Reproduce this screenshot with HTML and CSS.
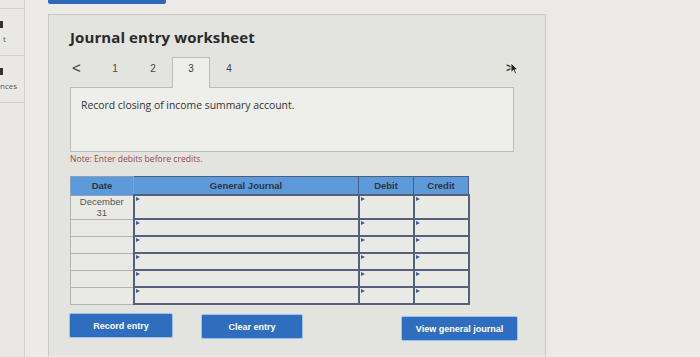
FILE: index.html
```html
<!DOCTYPE html>
<html lang="en">
<head>
    <meta charset="UTF-8">
    <meta name="viewport" content="width=device-width, initial-scale=1.0">
    <title>Journal entry worksheet</title>
    <link rel="stylesheet" href="styles.css">
</head>
<body>
    <div class="strona">
        <aside class="boczny">
            <div class="boczny-item"><span class="ikona"></span><span class="etykieta wciecie">t</span></div>
            <div class="boczny-item"><span class="ikona"></span><span class="etykieta">nces</span></div>
        </aside>

        <div class="glowny">
            <div class="pasek"></div>

            <section class="arkusz">
                <h1>Journal entry worksheet</h1>

                <div class="zakladki">
                    <span class="strzalka">&lt;</span>
                    <span class="zakladka">1</span>
                    <span class="zakladka">2</span>
                    <span class="zakladka aktywna">3</span>
                    <span class="zakladka">4</span>
                    <span class="strzalka prawa">&gt;
                        <svg class="kursor" width="9" height="13" viewBox="0 0 9 13">
                            <path d="M1 1 L1 10.5 L3.4 8.3 L5 12 L6.6 11.3 L5 7.7 L8 7.7 Z" fill="#222" stroke="#fff" stroke-width="0.8"/>
                        </svg>
                    </span>
                </div>

                <div class="opis">Record closing of income summary account.</div>

                <p class="uwaga">Note: Enter debits before credits.</p>

                <table class="dziennik">
                    <thead>
                        <tr>
                            <th class="kol-data">Date</th>
                            <th class="kol-konto">General Journal</th>
                            <th class="kol-kwota">Debit</th>
                            <th class="kol-kwota">Credit</th>
                        </tr>
                    </thead>
                    <tbody>
                        <tr class="pierwszy">
                            <td class="kol-data">December<br>31</td>
                            <td class="pole"></td>
                            <td class="pole"></td>
                            <td class="pole"></td>
                        </tr>
                        <tr><td class="kol-data"></td><td class="pole"></td><td class="pole"></td><td class="pole"></td></tr>
                        <tr><td class="kol-data"></td><td class="pole"></td><td class="pole"></td><td class="pole"></td></tr>
                        <tr><td class="kol-data"></td><td class="pole"></td><td class="pole"></td><td class="pole"></td></tr>
                        <tr><td class="kol-data"></td><td class="pole"></td><td class="pole"></td><td class="pole"></td></tr>
                        <tr><td class="kol-data"></td><td class="pole"></td><td class="pole"></td><td class="pole"></td></tr>
                    </tbody>
                </table>

                <div class="przyciski">
                    <button class="btn btn-zapisz">Record entry</button>
                    <button class="btn btn-wyczysc">Clear entry</button>
                    <button class="btn btn-widok">View general journal</button>
                </div>
            </section>
        </div>
    </div>
</body>
</html>
```

FILE: styles.css
```css
body {
    margin: 0;
    font-family: "Liberation Sans", Arial, sans-serif;
    background-color: #ebeae6;
    color: #333;
    height: 357px;
    overflow: hidden;
}

.strona {
    display: flex;
    height: 357px;
}

.boczny {
    width: 25px;
    flex-shrink: 0;
    padding-top: 8px;
    border-right: 1px solid #d2d1cc;
    background-color: #e9e8e4;
    box-sizing: border-box;
}

.boczny-item {
    height: 46px;
    border-top: 1px solid #d2d1cc;
    display: flex;
    flex-direction: column;
    align-items: flex-start;
    justify-content: center;
    font-family: "Open Sans", "Liberation Sans", sans-serif;
    font-size: 8px;
    color: #555;
}

.boczny-item:last-child {
    border-bottom: 1px solid #d2d1cc;
}

.ikona {
    width: 3px;
    height: 7px;
    background-color: #333;
    margin-bottom: 5px;
}

.etykieta.wciecie {
    padding-left: 3px;
}

.glowny {
    padding-left: 23px;
}

.pasek {
    width: 118px;
    height: 4px;
    background-color: #2f67b8;
    border-radius: 0 0 2px 2px;
}

.arkusz {
    width: 498px;
    height: 342px;
    margin-top: 10px;
    padding: 0 0 0 21px;
    box-sizing: border-box;
    background-color: #e3e3df;
    border: 1px solid #cac9c4;
    border-bottom: none;
}

.arkusz h1 {
    margin: 12px 0 0 0;
    font-family: "Open Sans", "Liberation Sans", sans-serif;
    font-size: 15px;
    font-weight: 700;
    color: #2a2a2a;
    letter-spacing: 0.1px;
}

.zakladki {
    display: flex;
    align-items: stretch;
    height: 30px;
    margin-top: 10px;
    width: 452px;
}

.strzalka {
    width: 26px;
    padding-left: 2px;
    font-size: 15px;
    color: #333;
    line-height: 22px;
    box-sizing: border-box;
}

.strzalka.prawa {
    margin-left: auto;
    width: 18px;
    font-size: 12px;
    font-weight: 700;
    color: #444;
    position: relative;
}

.kursor {
    position: absolute;
    left: 6px;
    top: 5px;
}

.zakladka {
    width: 38px;
    text-align: center;
    font-size: 10px;
    line-height: 22px;
    color: #444;
    border: 1px solid transparent;
    border-bottom: none;
    box-sizing: border-box;
}

.zakladka.aktywna {
    background-color: #eeeeea;
    border-color: #bdbcb7;
    margin-bottom: -1px;
    position: relative;
    z-index: 1;
}

.opis {
    width: 444px;
    height: 65px;
    padding: 10px 10px;
    box-sizing: border-box;
    background-color: #eeeeea;
    border: 1px solid #bdbcb7;
    font-family: "Open Sans", "Liberation Sans", sans-serif;
    font-size: 10.4px;
    color: #333;
}

.uwaga {
    margin: 1px 0 0 0;
    font-family: "Open Sans", "Liberation Sans", sans-serif;
    font-size: 8.6px;
    line-height: 12px;
    color: #9b4848;
}

.dziennik {
    margin-top: 11px;
    border-collapse: collapse;
    width: 396px;
    table-layout: fixed;
}

.dziennik th {
    height: 17px;
    padding: 0;
    background-color: #5d9ada;
    border: 1px solid #4b5f86;
    font-size: 9.5px;
    font-weight: 700;
    color: #2f3540;
}

.dziennik th.kol-data {
    width: 62px;
    border-color: #8aa1bd;
}

.dziennik th.kol-konto {
    width: 224px;
}

.dziennik th.kol-kwota {
    width: 54px;
}

.dziennik td {
    height: 15px;
    padding: 0;
    background-color: #e9e9e5;
}

.dziennik tr.pierwszy td {
    height: 22px;
}

.dziennik td.kol-data {
    border: 1px solid #b3b3af;
    text-align: center;
    vertical-align: top;
    font-size: 9.5px;
    line-height: 11px;
    color: #555;
}

.dziennik td.pole {
    border: 2px solid #56607a;
    position: relative;
}

.pole::before {
    content: "";
    position: absolute;
    left: 1px;
    top: 1px;
    border-left: 4px solid #3e5e9a;
    border-top: 2px solid transparent;
    border-bottom: 2px solid transparent;
}

.przyciski {
    display: flex;
    align-items: flex-start;
    margin-top: 9px;
    width: 447px;
}

.btn {
    height: 23px;
    border: none;
    border-radius: 1px;
    background-color: #2f6dbf;
    color: #fff;
    font-family: "Liberation Sans", Arial, sans-serif;
    font-size: 9px;
    font-weight: 700;
    cursor: pointer;
    box-shadow: 0 0 0 1px #9ec0e8;
}

.btn-zapisz {
    width: 102px;
}

.btn-wyczysc {
    width: 100px;
    margin-left: 30px;
    margin-top: 1px;
}

.btn-widok {
    width: 115px;
    margin-left: auto;
    margin-top: 3px;
}
```
